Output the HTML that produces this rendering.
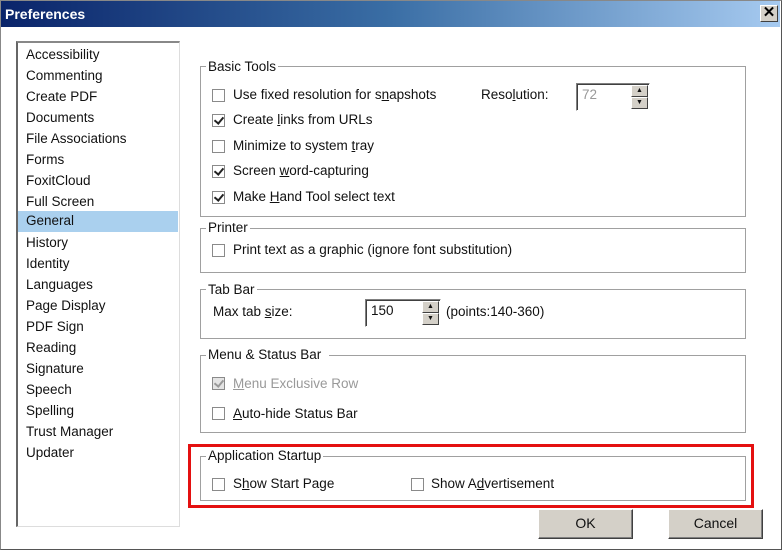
<!DOCTYPE html>
<html><head><style>
*{margin:0;padding:0;box-sizing:border-box}
body{width:782px;height:550px;background:#fff;font-family:"Liberation Sans",Tahoma,sans-serif;font-size:13.5px;color:#111;position:relative;overflow:hidden}
.a{position:absolute;white-space:nowrap}
#win{position:absolute;left:0;top:0;width:782px;height:550px;border:1px solid #888;border-right-color:#555;border-bottom-color:#555}
#title{position:absolute;left:1px;top:1px;width:779px;height:26px;background:linear-gradient(to right,#0a246a,#3a6ea5 50%,#a6caf0);color:#fff;font-weight:bold;font-size:14px;padding:5px 4px}
#x{position:absolute;left:760px;top:5px;width:18px;height:17px;background:#d4d0c8;border:1px solid;border-color:#fff #404040 #404040 #fff;font-size:15px;color:#000;text-align:center;line-height:14px;font-weight:bold}
#list{position:absolute;left:16px;top:41px;width:164px;height:486px;border:1px solid;border-color:#888 #ddd #ddd #888;border-left:2px solid #666;border-top:2px solid #888}
.it{position:absolute;left:8px;height:21px;line-height:20px}
.sel{left:0;width:160px;background:#aad0ee;padding-left:8px}
.g{position:absolute;border:1px solid #a0a0a0}
.gl{position:absolute;background:#fff;padding:0 2px;line-height:14px}
.cb{position:absolute;width:13px;height:13px;border:1px solid #8a8a8a;background:#fff}
.cb.c::after{content:"";position:absolute;left:3px;top:0px;width:4px;height:7px;border:solid #222;border-width:0 2px 2px 0;transform:rotate(40deg)}
.cb.d{background:#e4e4e4}.cb.d::after{border-color:#999}
.btn{position:absolute;background:#d4d0c8;border:1px solid;border-color:#fff #404040 #404040 #fff;box-shadow:inset -1px -1px #808080;text-align:center;line-height:27px;font-size:14px}
.spin{position:absolute;border:1px solid;border-color:#808080 #fff #fff #808080;box-shadow:inset 1px 1px #404040;background:#fff;padding:3px 5px}
.sb{position:absolute;width:17px;height:12px;background:#d4d0c8;border:1px solid;border-color:#fff #404040 #404040 #fff;font-size:7px;text-align:center;line-height:10px}
</style></head><body>
<div id="win"></div>
<div id="title">Preferences</div>
<div id="x">✕</div>
<div id="list">
<div class="it" style="top:2px">Accessibility</div>
<div class="it" style="top:23px">Commenting</div>
<div class="it" style="top:44px">Create PDF</div>
<div class="it" style="top:65px">Documents</div>
<div class="it" style="top:86px">File Associations</div>
<div class="it" style="top:107px">Forms</div>
<div class="it" style="top:128px">FoxitCloud</div>
<div class="it" style="top:149px">Full Screen</div>
<div class="it sel" style="top:168px">General</div>
<div class="it" style="top:190px">History</div>
<div class="it" style="top:211px">Identity</div>
<div class="it" style="top:232px">Languages</div>
<div class="it" style="top:253px">Page Display</div>
<div class="it" style="top:274px">PDF Sign</div>
<div class="it" style="top:295px">Reading</div>
<div class="it" style="top:316px">Signature</div>
<div class="it" style="top:337px">Speech</div>
<div class="it" style="top:358px">Spelling</div>
<div class="it" style="top:379px">Trust Manager</div>
<div class="it" style="top:400px">Updater</div>
</div>

<div class="g" style="left:200px;top:66px;width:546px;height:151px"></div>
<div class="gl" style="left:206px;top:60px">Basic Tools</div>
<div class="cb" style="left:212px;top:89px"></div><div class="a" style="left:233px;top:87px">Use fixed resolution for s<u>n</u>apshots</div>
<div class="a" style="left:481px;top:87px">Reso<u>l</u>ution:</div>
<div class="spin" style="left:576px;top:83px;width:74px;height:28px;color:#999">72</div>
<div class="sb" style="left:631px;top:85px">▲</div><div class="sb" style="left:631px;top:97px">▼</div>
<div class="cb c" style="left:212px;top:114px"></div><div class="a" style="left:233px;top:112px">Create <u>l</u>inks from URLs</div>
<div class="cb" style="left:212px;top:140px"></div><div class="a" style="left:233px;top:138px">Minimize to system <u>t</u>ray</div>
<div class="cb c" style="left:212px;top:165px"></div><div class="a" style="left:233px;top:163px">Screen <u>w</u>ord-capturing</div>
<div class="cb c" style="left:212px;top:191px"></div><div class="a" style="left:233px;top:189px">Make <u>H</u>and Tool select text</div>

<div class="g" style="left:200px;top:228px;width:546px;height:45px"></div>
<div class="gl" style="left:206px;top:221px">Printer</div>
<div class="cb" style="left:212px;top:244px"></div><div class="a" style="left:233px;top:242px">Print text as a <u>g</u>raphic (ignore font substitution)</div>

<div class="g" style="left:200px;top:289px;width:546px;height:50px"></div>
<div class="gl" style="left:206px;top:283px">Tab Bar</div>
<div class="a" style="left:213px;top:304px">Max tab <u>s</u>ize:</div>
<div class="spin" style="left:365px;top:299px;width:76px;height:28px">150</div>
<div class="sb" style="left:422px;top:301px">▲</div><div class="sb" style="left:422px;top:313px">▼</div>
<div class="a" style="left:446px;top:304px">(points:140-360)</div>

<div class="g" style="left:200px;top:355px;width:546px;height:78px"></div>
<div class="gl" style="left:206px;top:348px;padding-right:8px">Menu &amp; Status Bar</div>
<div class="cb c d" style="left:212px;top:377px"></div><div class="a" style="left:233px;top:376px;color:#999"><u>M</u>enu Exclusive Row</div>
<div class="cb" style="left:212px;top:407px"></div><div class="a" style="left:233px;top:406px"><u>A</u>uto-hide Status Bar</div>

<div class="a" style="left:188px;top:444px;width:566px;height:64px;border:3px solid #e41010"></div>
<div class="g" style="left:200px;top:456px;width:546px;height:45px"></div>
<div class="gl" style="left:206px;top:449px">Application Startup</div>
<div class="cb" style="left:212px;top:478px"></div><div class="a" style="left:233px;top:476px">S<u>h</u>ow Start Page</div>
<div class="cb" style="left:411px;top:478px"></div><div class="a" style="left:431px;top:476px">Show A<u>d</u>vertisement</div>

<div class="btn" style="left:538px;top:509px;width:95px;height:30px">OK</div>
<div class="btn" style="left:668px;top:509px;width:95px;height:30px">Cancel</div>
</body></html>
